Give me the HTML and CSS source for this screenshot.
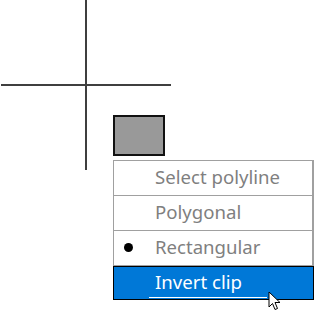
FILE: index.html
```html
<!DOCTYPE html>
<html lang="en">
<head>
    <meta charset="UTF-8">
    <title>Clip menu</title>
    <link rel="stylesheet" href="styles.css">
</head>
<body>
    <div class="canvas">
        <div class="cross-v"></div>
        <div class="cross-h"></div>
        <div class="swatch"></div>

        <ul class="menu">
            <li class="item">Select polyline</li>
            <li class="item">Polygonal</li>
            <li class="item checked"><span class="bullet"></span>Rectangular</li>
            <li class="item active">Invert clip</li>
        </ul>

        <svg class="cursor" width="14" height="22" viewBox="0 0 14 22">
            <path d="M1 1 L1 16 L4.5 12.5 L7 18.5 L9.5 17.5 L7 11.5 L12 11.5 Z" fill="#fff" stroke="#000" stroke-width="1" stroke-linejoin="miter"/>
        </svg>
    </div>
</body>
</html>
```

FILE: styles.css
```css
body {
    margin: 0;
    background: #fff;
    font-family: 'Noto Sans', 'Open Sans', sans-serif;
}
.canvas {
    position: relative;
    width: 314px;
    height: 310px;
    overflow: hidden;
}
.cross-v {
    position: absolute;
    left: 85px;
    top: 0;
    width: 2px;
    height: 170px;
    background: #3f3f3f;
}
.cross-h {
    position: absolute;
    left: 1px;
    top: 84px;
    width: 170px;
    height: 2px;
    background: #3f3f3f;
}
.swatch {
    position: absolute;
    left: 113px;
    top: 115px;
    width: 48px;
    height: 37px;
    background: #999;
    border: 2px solid #111;
}
.menu {
    position: absolute;
    left: 113px;
    top: 160px;
    width: 198px;
    margin: 0;
    padding: 0;
    list-style: none;
    border: 1px solid #a0a0a0;
    border-right-width: 2px;
    border-bottom: none;
}
.item {
    height: 34px;
    line-height: 31px;
    padding-left: 41px;
    font-size: 18.6px;
    color: #7f7f7f;
    border-bottom: 1px solid #a0a0a0;
    position: relative;
}
.bullet {
    position: absolute;
    left: 10px;
    top: 12px;
    width: 9px;
    height: 9px;
    border-radius: 50%;
    background: #000;
}
.item.active {
    margin: 0 -2px 0 -1px;
    padding-left: 41px;
    background: #0078d7;
    color: #fff;
    border: 1px solid #000;
    height: 32px;
    line-height: 29px;
}
.item.active::after {
    content: '';
    position: absolute;
    left: 35px;
    bottom: 1px;
    width: 118px;
    height: 1px;
    background: #fff;
}
.cursor {
    position: absolute;
    left: 268px;
    top: 291px;
}
```
